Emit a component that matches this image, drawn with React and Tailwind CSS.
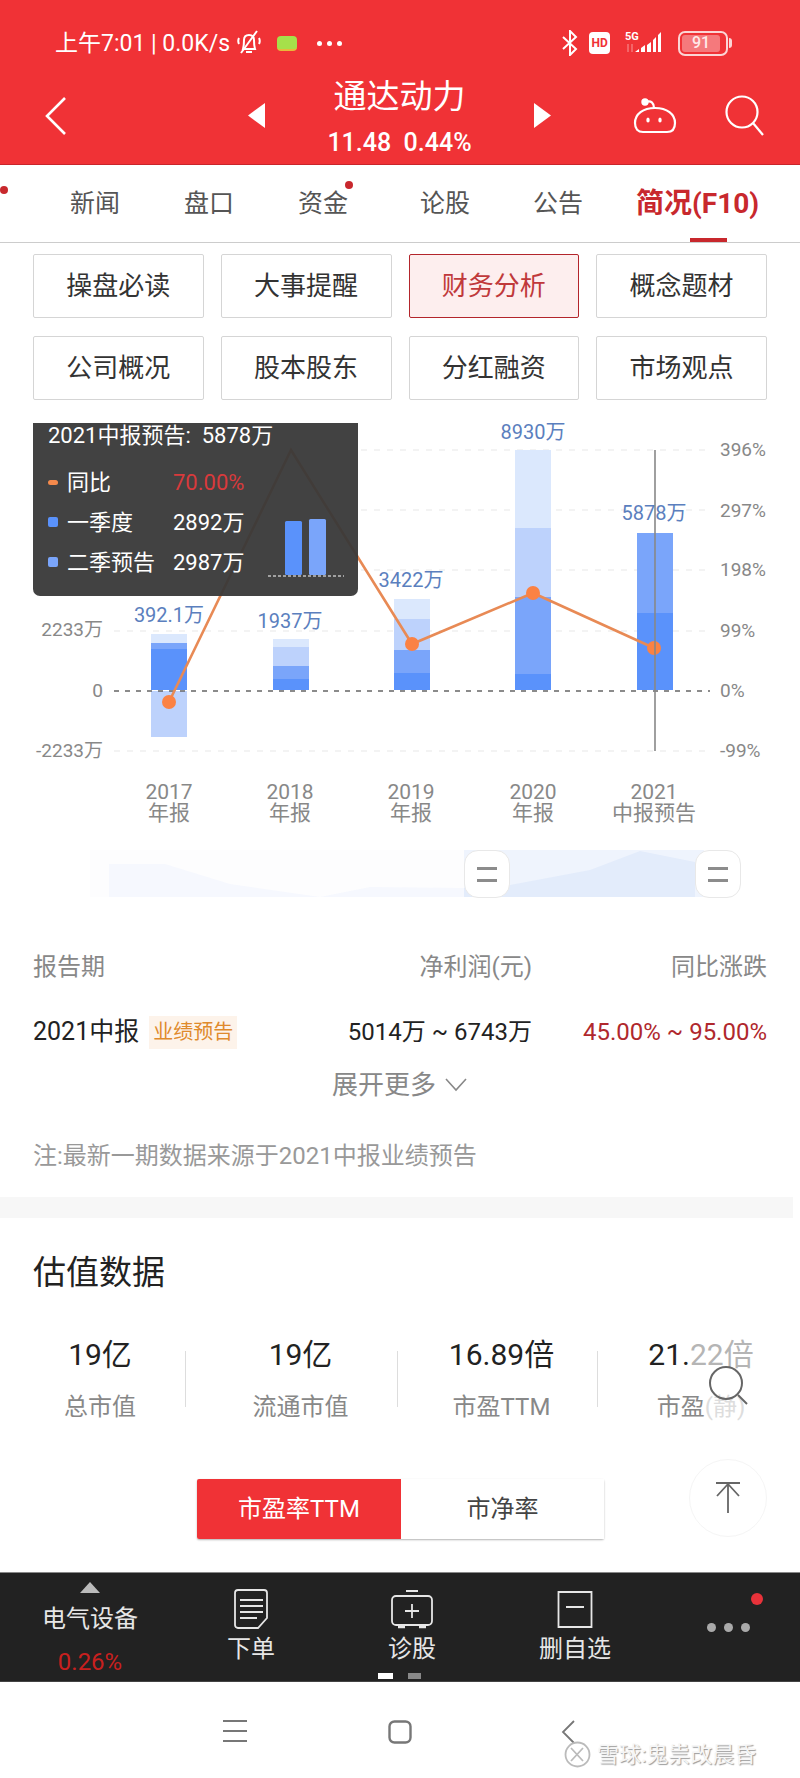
import React from 'react';

const tabs = [
  { label: '新闻', cls: 'ml-[70px]' },
  { label: '盘口', cls: 'ml-[64px]' },
  { label: '资金', cls: 'ml-[64px]', dot: true },
  { label: '论股', cls: 'ml-[72px]' },
  { label: '公告', cls: 'ml-[63px]' },
];

const quickLinks = ['操盘必读', '大事提醒', '财务分析', '概念题材', '公司概况', '股本股东', '分红融资', '市场观点'];

const C1 = '#5a92fb';
const C2 = '#7aa5fa';
const C3 = '#bdd2fc';
const C4 = '#dbe8fd';

const bars = [
  { x: 151, segs: [[634, 643, C4], [643, 649, C2], [649, 690, C1], [691, 737, C3]] },
  { x: 273, segs: [[639, 647, C4], [647, 666, C3], [666, 679, C2], [679, 690, C1]] },
  { x: 394, segs: [[599, 619, C4], [619, 650, C3], [650, 673, C2], [673, 690, C1]] },
  { x: 515, segs: [[450, 528, C4], [528, 597, C3], [597, 674, C2], [674, 690, C1]] },
  { x: 637, segs: [[533, 613, C2], [613, 690, C1]] },
];

const barLabels = [
  ['392.1万', 169, 615],
  ['1937万', 290, 621],
  ['3422万', 411, 580],
  ['8930万', 533, 432],
  ['5878万', 654, 513],
];

const leftAxis = [['2233万', 629], ['0', 690], ['-2233万', 750]];
const rightAxis = [['396%', 449], ['297%', 510], ['198%', 569], ['99%', 630], ['0%', 690], ['-99%', 750]];
const xAxis = [
  ['2017', '年报', 169],
  ['2018', '年报', 290],
  ['2019', '年报', 411],
  ['2020', '年报', 533],
  ['2021', '中报预告', 654],
];

function StatusBar() {
  return (
    <div className="flex h-[66px] items-center pt-[20px] text-white">
      <span className="ml-[55px] text-[23px] leading-none whitespace-nowrap">上午7:01 | 0.0K/s</span>
      <svg className="ml-[5px]" width="28" height="30" viewBox="0 0 28 30" fill="none" stroke="white" strokeWidth="2">
        <path d="M8 21c1-3 1-6 1-9 0-3 2-5 5-5s5 2 5 5c0 3 0 6 1 9z" />
        <path d="M11 24h6M4 10c-1 2-1 4 0 6M24 10c1 2 1 4 0 6M22 3 6 25" />
      </svg>
      <div className="ml-[14px] h-[15px] w-[20px] rounded-[4px] border-b-2 border-[#e8b93a] bg-[#a6e04a]" />
      <div className="ml-[20px] flex gap-[5px]">
        <div className="h-[5px] w-[5px] rounded-full bg-white" />
        <div className="h-[5px] w-[5px] rounded-full bg-white" />
        <div className="h-[5px] w-[5px] rounded-full bg-white" />
      </div>
      <svg className="ml-[220px]" width="16" height="26" viewBox="0 0 16 26" fill="none" stroke="white" strokeWidth="2">
        <path d="M1 7l13 12-6 6V1l6 6L1 19" />
      </svg>
      <div className="ml-[11px] flex h-[22px] w-[21px] items-center justify-center rounded-[4px] bg-white text-[12px] leading-none font-bold text-[#f03236]">HD</div>
      <svg className="ml-[15px]" width="40" height="24" viewBox="0 0 40 24" fill="white">
        <text x="0" y="9" fontSize="11" fontWeight="700">5G</text>
        <path d="M10 21h4v-3l-4 3zM16 21h4v-7l-4 3zM22 21h4V11l-4 3zM28 21h3V6l-3 3zM33 21h3V1l-3 3z" />
        <path d="M3 13v8M7 13v8" stroke="white" strokeOpacity="0.5" strokeWidth="1" />
      </svg>
      <div className="ml-[13px] flex items-center">
        <div className="h-[25px] w-[50px] rounded-[7px] border-2 border-[#fbd5d5] p-[2px]">
          <div className="flex h-full w-[38px] items-center justify-center rounded-[3px] bg-[#f5797c] text-[16px] leading-none font-medium text-[#ffe9e9]">91</div>
        </div>
        <div className="ml-[1px] h-[10px] w-[3px] rounded-r-full bg-[#fbd5d5]" />
      </div>
    </div>
  );
}

function NavRow() {
  return (
    <div className="flex h-[99px] items-center text-white">
      <div className="w-[248px] pl-[45px]">
        <svg width="22" height="38" viewBox="0 0 22 38" fill="none" stroke="white" strokeWidth="2.6">
          <path d="M20 1 2 19l18 18" />
        </svg>
      </div>
      <svg width="17" height="25" viewBox="0 0 17 25" fill="white"><path d="M17 0v25L0 12.5z" /></svg>
      <div className="flex w-[269px] flex-col items-center pt-[11px] pb-[7px]">
        <div className="h-[40px] text-[33px] leading-[40px]">通达动力</div>
        <div className="mt-[11px] h-[30px] text-[25px] leading-[30px] font-medium whitespace-pre">11.48  0.44%</div>
      </div>
      <svg width="17" height="25" viewBox="0 0 17 25" fill="white"><path d="M0 0v25l17-12.5z" /></svg>
      <svg className="ml-[82px]" width="44" height="38" viewBox="0 0 44 38" fill="none" stroke="white" strokeWidth="2.2">
        <path d="M13 5c5-2 8 1 8 6" />
        <circle cx="12" cy="5" r="2.6" fill="white" />
        <path d="M2 26c0-9 8-15 20-15s20 6 20 15c0 6-3 9-8 9H10c-5 0-8-3-8-9z" />
        <ellipse cx="15" cy="23" rx="1.7" ry="2.6" fill="white" stroke="none" />
        <ellipse cx="27" cy="23" rx="1.7" ry="2.6" fill="white" stroke="none" />
      </svg>
      <svg className="ml-[47px]" width="40" height="42" viewBox="0 0 40 42" fill="none" stroke="white" strokeWidth="2.2">
        <circle cx="18" cy="17" r="15.5" />
        <path d="M29 28l10 12" />
      </svg>
    </div>
  );
}

function Chart() {
  const gridY = [450, 510, 570, 631, 751];
  return (
    <div className="relative mt-[10px] h-[430px]">
      <svg className="block" width="800" height="430" viewBox="0 410 800 430">
        {gridY.map(y => (
          <line key={y} x1="114" x2="710" y1={y} y2={y} stroke="#e8e8e8" strokeWidth="1.2" strokeDasharray="6 7" />
        ))}
        {bars.map(b =>
          b.segs.map(([t, e, c]) => <rect key={`${b.x}-${t}`} x={b.x} y={t} width="36" height={e - t} fill={c} />)
        )}
        <line x1="114" x2="710" y1="691" y2="691" stroke="#666" strokeWidth="1.4" strokeDasharray="5 6" />
        <polyline points="169,702 291,450 412,644 533,593 654,648" fill="none" stroke="#e88a55" strokeWidth="2.6" />
        {[[169, 702], [412, 644], [533, 593], [654, 648]].map(([x, y]) => (
          <circle key={x} cx={x} cy={y} r="7" fill="#fb8244" />
        ))}
        <line x1="655" x2="655" y1="450" y2="751" stroke="#888" strokeWidth="1.6" />
        {barLabels.map(([t, x, y]) => (
          <text key={t} x={x} y={y} fontSize="20" fill="#5b7fbe" textAnchor="middle" dominantBaseline="central">{t}</text>
        ))}
        {leftAxis.map(([t, y]) => (
          <text key={t} x="103" y={y} fontSize="19" fill="#888" textAnchor="end" dominantBaseline="central">{t}</text>
        ))}
        {rightAxis.map(([t, y]) => (
          <text key={t} x="720" y={y} fontSize="19" fill="#888" dominantBaseline="central">{t}</text>
        ))}
        {xAxis.map(([a, b, x]) => (
          <g key={a} fill="#888" fontSize="21" textAnchor="middle" dominantBaseline="central">
            <text x={x} y="792">{a}</text>
            <text x={x} y="813">{b}</text>
          </g>
        ))}
      </svg>

      <div className="absolute top-[13px] left-[33px] h-[173px] w-[325px] rounded-b-[7px] bg-[#383838]/95 pl-[15px] text-white">
        <div className="h-[26px] text-[22px] leading-[26px] whitespace-pre">2021中报预告:  5878万</div>
        <div className="mt-[13px] flex h-[40px] items-center text-[22px]">
          <div className="mr-[9px] h-[5px] w-[10px] rounded-full bg-[#f58a4c]" />
          <span className="w-[106px]">同比</span>
          <span className="text-[#d83a3c]">70.00%</span>
        </div>
        <div className="flex h-[40px] items-center text-[22px]">
          <div className="mr-[9px] h-[10px] w-[10px] rounded-[2px] bg-[#5a92fb]" />
          <span className="w-[106px]">一季度</span>
          <span>2892万</span>
        </div>
        <div className="flex h-[40px] items-center text-[22px]">
          <div className="mr-[9px] h-[10px] w-[10px] rounded-[2px] bg-[#7aa5fa]" />
          <span className="w-[106px] whitespace-nowrap">二季预告</span>
          <span>2987万</span>
        </div>
        <svg className="absolute top-[96px] left-[235px]" width="76" height="60" viewBox="0 0 76 60">
          <rect x="17" y="2" width="17" height="54" rx="1.5" fill="#5a92fb" />
          <rect x="41" y="0" width="17" height="56" rx="1.5" fill="#7aa5fa" />
          <line x1="0" x2="76" y1="57" y2="57" stroke="white" strokeDasharray="3 2" />
        </svg>
      </div>
    </div>
  );
}

function RangeSlider() {
  return (
    <div className="relative mt-[10px] h-[48px]">
      <svg className="block" width="800" height="48" viewBox="0 850 800 48">
        <rect x="90" y="850" width="610" height="47" fill="#fdfdfe" />
        <rect x="464" y="850" width="240" height="47" fill="#eff4fd" />
        <path d="M109 897v-33h56l65 20 90 13 50-10 94 1v9z" fill="#f6f8fe" />
        <path d="M464 897v-9l46-3 80-15 50-19 55 11v35z" fill="#e3ecfb" />
      </svg>
      {['left-[464px]', 'left-[695px]'].map(pos => (
        <div key={pos} className={`absolute top-[0px] flex h-[48px] w-[46px] flex-col items-center justify-center gap-[9px] rounded-[14px] border border-[#e8e8e8] bg-white ${pos}`}>
          <div className="h-[3px] w-[20px] bg-[#8c8c8c]" />
          <div className="h-[3px] w-[20px] bg-[#8c8c8c]" />
        </div>
      ))}
    </div>
  );
}

function ProfitTable() {
  return (
    <div>
      <div className="mt-[51px] flex h-[36px] items-center px-[33px] text-[24px] text-[#888]">
        <span className="w-[220px]">报告期</span>
        <span className="w-[279px] text-right">净利润(元)</span>
        <span className="flex-1 text-right">同比涨跌</span>
      </div>
      <div className="mt-[29px] flex h-[36px] items-center px-[33px] text-[24px] text-[#222]">
        <div className="flex w-[220px] items-center">
          <span className="text-[25px]">2021中报</span>
          <span className="ml-[10px] flex h-[33px] w-[88px] items-center justify-center bg-[#fdf3ea] text-[20px] text-[#e08a2c]">业绩预告</span>
        </div>
        <span className="w-[279px] text-right whitespace-nowrap">5014万 ~ 6743万</span>
        <span className="flex-1 text-right whitespace-nowrap text-[#b0282d]">45.00% ~ 95.00%</span>
      </div>
      <div className="mt-[17px] flex h-[36px] items-center pl-[332px] text-[26px] text-[#888]">
        展开更多
        <svg className="ml-[9px]" width="22" height="14" viewBox="0 0 22 14" fill="none" stroke="#888" strokeWidth="1.6">
          <path d="M1 1l10 11L21 1" />
        </svg>
      </div>
      <div className="mt-[35px] h-[36px] pl-[33px] text-[24px] leading-[36px] text-[#999]">注:最新一期数据来源于2021中报业绩预告</div>
      <div className="mt-[23px] h-[21px] w-[793px] bg-[#f7f7f7]" />
    </div>
  );
}

function Valuation() {
  return (
    <div>
      <div className="mt-[33px] h-[44px] pl-[33px] text-[33px] leading-[44px] text-[#222]">估值数据</div>
      <div className="mt-[40px] flex h-[88px]">
        <div className="flex w-[185px] flex-col items-center pl-[15px]">
          <div className="h-[40px] text-[30px] leading-[40px] text-[#222]">19亿</div>
          <div className="mt-[16px] h-[32px] text-[24px] leading-[32px] text-[#888]">总市值</div>
        </div>
        <div className="my-[16px] w-px bg-[#ddd]" />
        <div className="flex w-[211px] flex-col items-center pl-[18px]">
          <div className="h-[40px] text-[30px] leading-[40px] text-[#222]">19亿</div>
          <div className="mt-[16px] h-[32px] text-[24px] leading-[32px] text-[#888]">流通市值</div>
        </div>
        <div className="my-[16px] w-px bg-[#ddd]" />
        <div className="flex w-[199px] flex-col items-center pl-[8px]">
          <div className="h-[40px] text-[30px] leading-[40px] text-[#222]">16.89倍</div>
          <div className="mt-[16px] h-[32px] text-[24px] leading-[32px] text-[#888]">市盈TTM</div>
        </div>
        <div className="my-[16px] w-px bg-[#ddd]" />
        <div className="flex flex-1 flex-col items-center pl-[4px]">
          <div className="h-[40px] text-[30px] leading-[40px] text-[#222]">21.<span className="text-[#b5b5b5]">22倍</span></div>
          <div className="mt-[16px] h-[32px] text-[24px] leading-[32px] text-[#888]">市盈<span className="text-[#ddd]">(静)</span></div>
        </div>
      </div>
      <div className="mt-[56px] ml-[197px] flex h-[60px] w-[407px] rounded-[2px] shadow-[0_1px_2px_rgba(0,0,0,0.3)]">
        <div className="flex w-[204px] items-center justify-center rounded-l-[2px] bg-[#f03236] text-[24px] text-white">市盈率TTM</div>
        <div className="flex flex-1 items-center justify-center bg-white text-[24px] text-[#444]">市净率</div>
      </div>
    </div>
  );
}

function BottomBar() {
  return (
    <div className="relative mt-[33px] flex h-[110px] border-t border-b border-t-[#888] border-b-[#444] bg-[#222] text-[24px] text-[#e6e6e6]">
      <div className="flex w-[180px] flex-col items-center pt-[9px]">
        <svg width="20" height="11" viewBox="0 0 20 11" fill="#bbb"><path d="M10 0l10 11H0z" /></svg>
        <div className="mt-[11px] h-[30px] leading-[30px]">电气设备</div>
        <div className="mt-[13px] h-[30px] leading-[30px] text-[#c8201f]">0.26%</div>
      </div>
      <div className="flex w-[142px] flex-col items-center pt-[16px]">
        <svg width="36" height="40" viewBox="0 0 36 40" fill="none" stroke="#e6e6e6" strokeWidth="1.8">
          <path d="M5 1h26a3 3 0 0 1 3 3v25l-9 10H5a3 3 0 0 1-3-3V4a3 3 0 0 1 3-3z" />
          <path d="M7 11h23M7 17h23M7 23h23M7 29h17" />
        </svg>
        <div className="mt-[5px] h-[30px] leading-[30px]">下单</div>
      </div>
      <div className="flex w-[180px] flex-col items-center pt-[16px]">
        <svg width="44" height="40" viewBox="0 0 44 40" fill="none" stroke="#e6e6e6" strokeWidth="1.8">
          <path d="M16 2h12M6 7h32a4 4 0 0 1 4 4v21a4 4 0 0 1-4 4H6a4 4 0 0 1-4-4V11a4 4 0 0 1 4-4zM22 15v14M15 22h14" />
          <path d="M8 38h7M29 38h7" strokeWidth="2.4" />
        </svg>
        <div className="mt-[5px] h-[30px] leading-[30px]">诊股</div>
      </div>
      <div className="flex w-[146px] flex-col items-center pt-[16px]">
        <svg width="36" height="40" viewBox="0 0 36 40" fill="none" stroke="#e6e6e6" strokeWidth="1.8">
          <path d="M1.5 3h33v35h-33zM9 18h18" />
        </svg>
        <div className="mt-[5px] h-[30px] leading-[30px]">删自选</div>
      </div>
      <div className="relative flex flex-1 items-start gap-[8px] pt-[50px] pl-[59px]">
        <div className="h-[9px] w-[9px] rounded-full bg-[#aaa]" />
        <div className="h-[9px] w-[9px] rounded-full bg-[#aaa]" />
        <div className="h-[9px] w-[9px] rounded-full bg-[#aaa]" />
        <div className="absolute top-[20px] left-[103px] h-[12px] w-[12px] rounded-full bg-[#e8323a]" />
      </div>
      <div className="absolute bottom-[2px] left-[378px] flex gap-[15px]">
        <div className="h-[6px] w-[15px] bg-white" />
        <div className="h-[6px] w-[13px] bg-[#888]" />
      </div>
    </div>
  );
}

function SystemNav() {
  return (
    <div className="relative flex h-[97px] items-start pt-[38px]">
      <svg className="ml-[223px]" width="24" height="22" viewBox="0 0 24 22" stroke="#777" strokeWidth="2">
        <path d="M0 1h24M0 11h24M0 21h24" />
      </svg>
      <svg className="ml-[141px]" width="24" height="24" viewBox="0 0 24 24" fill="none" stroke="#777" strokeWidth="2.4">
        <rect x="1.5" y="1.5" width="21" height="21" rx="5" />
      </svg>
      <svg className="ml-[149px]" width="14" height="24" viewBox="0 0 14 24" fill="none" stroke="#777" strokeWidth="1.8">
        <path d="M13 1 2 12l11 11" />
      </svg>
      <div className="absolute top-[59px] left-[563px] flex items-center">
        <svg width="29" height="27" viewBox="0 0 29 27" fill="none" stroke="#bbb" strokeWidth="1.8">
          <circle cx="14.5" cy="13.5" r="12" />
          <path d="M8 7l12 13M20 7 8 20" />
        </svg>
        <span className="ml-[5px] text-[22px] leading-none whitespace-nowrap text-[#f6f6f6] [text-shadow:1px_1px_1px_#999]">雪球:鬼祟改晨昏</span>
      </div>
    </div>
  );
}

export default function App() {
  return (
    <div className="relative h-[1778px] w-[800px] overflow-hidden bg-white font-['Roboto','Noto_Sans_CJK_SC',sans-serif]">
      <div className="h-[165px] border-b border-[#c9252b] bg-[#f03236]">
        <StatusBar />
        <NavRow />
      </div>

      {/* tabs */}
      <div className="relative flex h-[78px] items-center border-b border-[#ccc] text-[25px] text-[#555]">
        <div className="absolute top-[21px] left-[0px] h-[8px] w-[8px] rounded-full bg-[#c8282d]" />
        {tabs.map(t => (
          <div key={t.label} className={`relative ${t.cls}`}>
            {t.label}
            {t.dot && <div className="absolute top-[-4px] right-[-5px] h-[8px] w-[8px] rounded-full bg-[#c8282d]" />}
          </div>
        ))}
        <div className="relative ml-[53px] text-[28px] font-bold whitespace-nowrap text-[#c8282d]">简况(F10)</div>
        <div className="absolute bottom-[0px] left-[690px] h-[4px] w-[37px] bg-[#c8282d]" />
      </div>

      <div className="grid grid-cols-4 gap-x-[17px] gap-y-[18px] px-[33px] pt-[11px]">
        {quickLinks.map(l => (
          <div
            key={l}
            className={
              l === '财务分析'
                ? 'flex h-[64px] items-center justify-center rounded-[2px] border border-[#b3252b] bg-[#fdeeee] text-[26px] text-[#c0393b]'
                : 'flex h-[64px] items-center justify-center rounded-[2px] border border-[#d5d5d5] text-[26px] text-[#333]'
            }
          >
            {l}
          </div>
        ))}
      </div>

      <Chart />
      <RangeSlider />
      <ProfitTable />
      <Valuation />
      <BottomBar />
      <SystemNav />

      {/* floating lens and back-to-top */}
      <svg className="absolute top-[1365px] left-[708px]" width="42" height="42" viewBox="0 0 42 42" fill="none" stroke="#666" strokeWidth="2">
        <circle cx="18" cy="18" r="16" />
        <path d="M30 30l9 9" />
      </svg>
      <div className="absolute top-[1459px] left-[689px] flex h-[78px] w-[78px] items-center justify-center rounded-full border border-[#f5f5f5] bg-white">
        <svg width="26" height="32" viewBox="0 0 26 32" fill="none" stroke="#666" strokeWidth="1.8">
          <path d="M1 1h24M13 31V2M2 14 13 2l11 12" />
        </svg>
      </div>
    </div>
  );
}
